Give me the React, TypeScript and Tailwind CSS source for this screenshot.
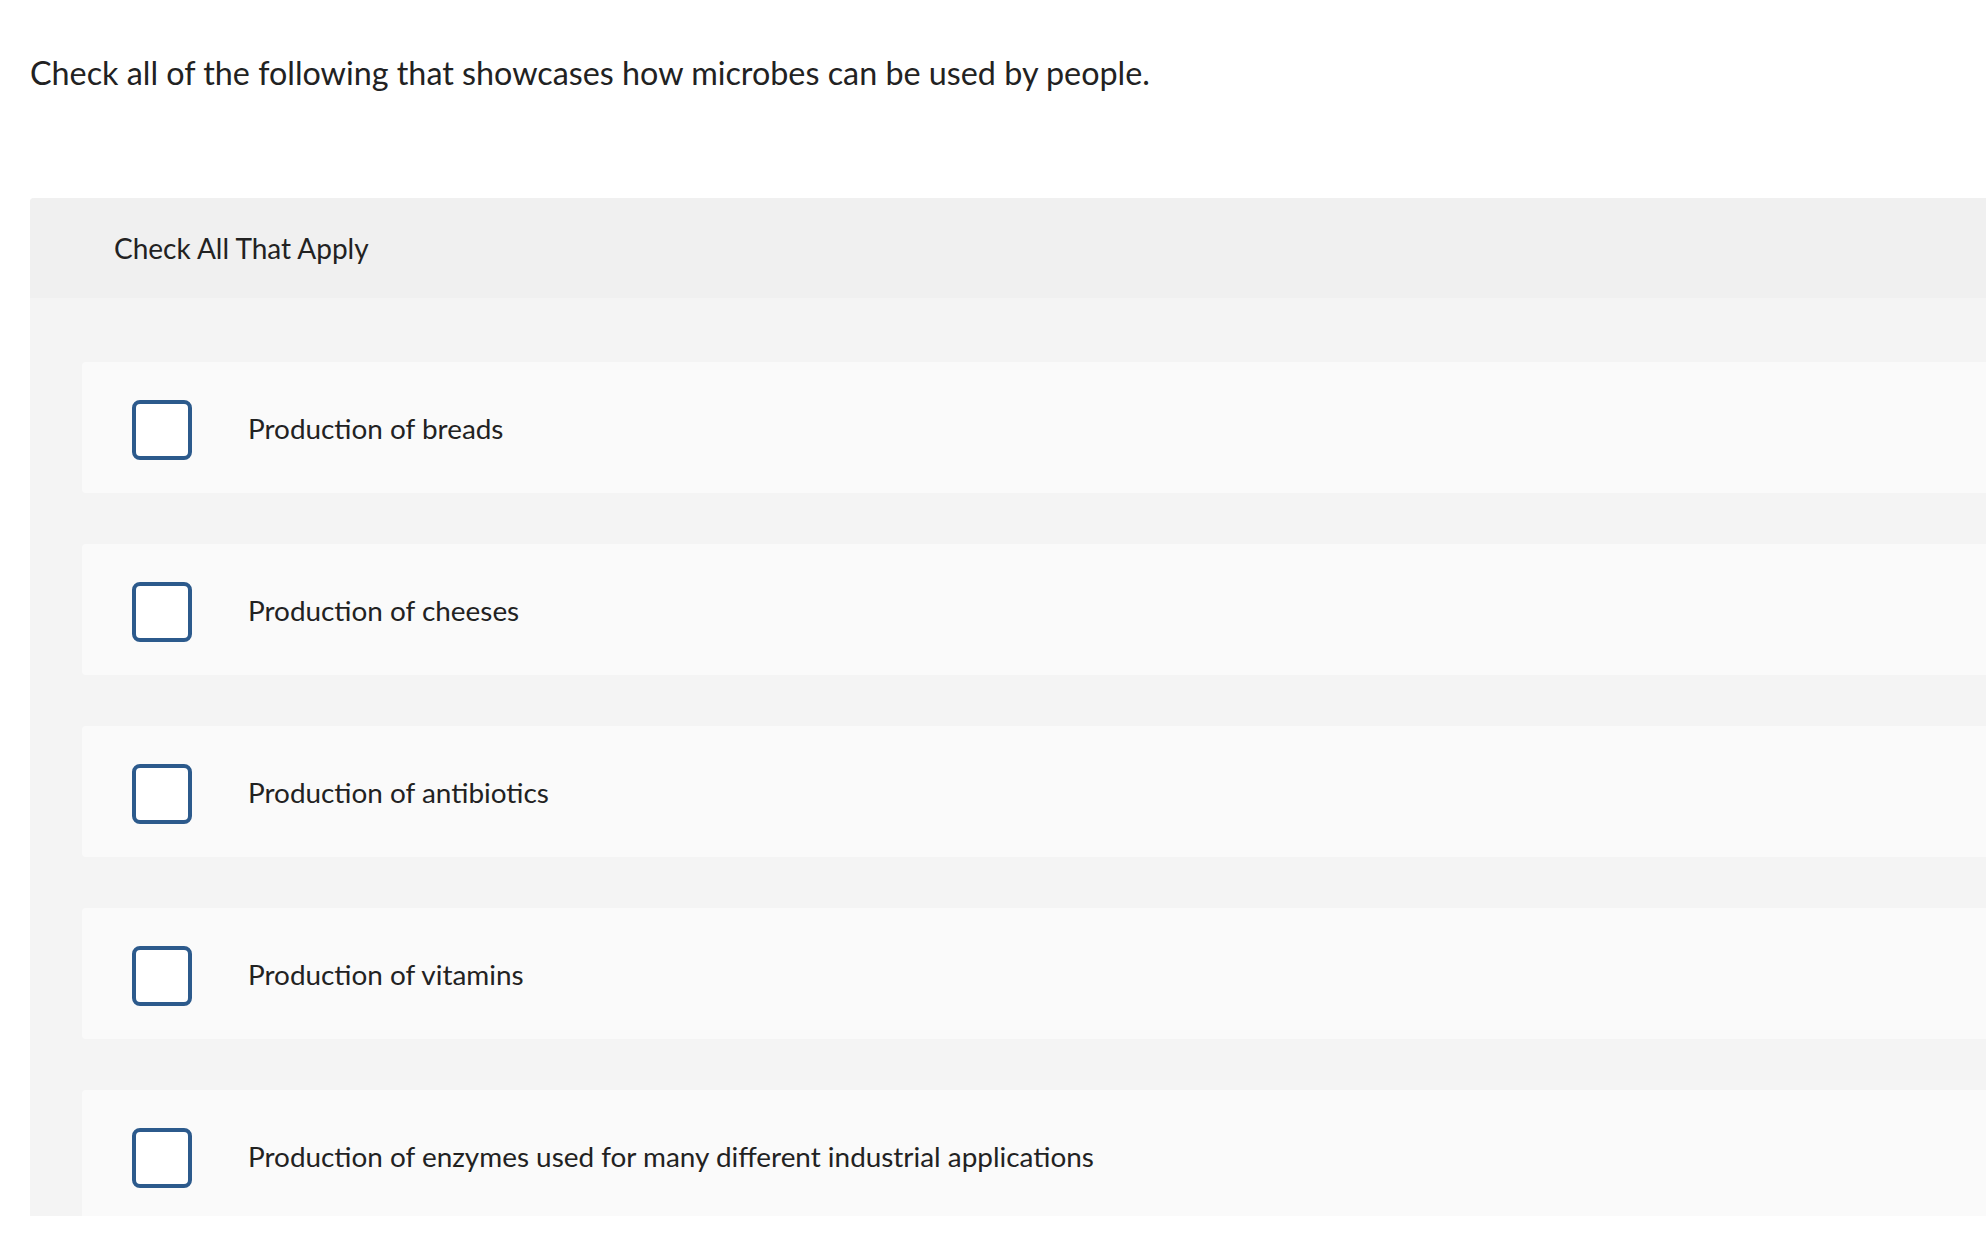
import React from "react";

const options = [
  "Production of breads",
  "Production of cheeses",
  "Production of antibiotics",
  "Production of vitamins",
  "Production of enzymes used for many different industrial applications",
];

export default function App() {
  return (
    <div className="min-h-[1234px] w-[1986px] overflow-hidden bg-white text-[#222222] font-['Lato','Liberation_Sans',sans-serif]">
      <div className="h-[198px] pl-[30px] pt-[54px]">
        <p className="text-[32.3px] leading-[38px]">
          Check all of the following that showcases how microbes can be used by people.
        </p>
      </div>
      <div className="ml-[30px] h-[1018px] overflow-hidden rounded-tl-[4px] bg-[#f4f4f4]">
        <div className="flex h-[100px] items-center bg-[#f0f0f0] pl-[84px]">
          <span className="text-[28px] leading-[34px]">Check All That Apply</span>
        </div>
        <div className="flex flex-col gap-[51px] pl-[52px] pt-[64px]">
          {options.map((o) => (
            <div
              key={o}
              className="flex h-[131px] items-center rounded-l-[4px] bg-[#fafafa] pl-[50px]"
            >
              <div className="mt-[4px] h-[60px] w-[60px] shrink-0 rounded-[8px] border-4 border-[#2c5a8c] bg-white" />
              <span className="ml-[56px] text-[27.9px] leading-[34px]">{o}</span>
            </div>
          ))}
        </div>
      </div>
    </div>
  );
}
